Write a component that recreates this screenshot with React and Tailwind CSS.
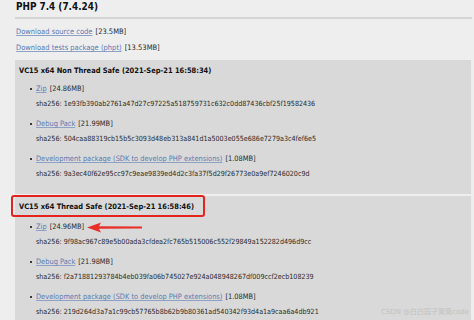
const panels = [
  {
    title: "VC15 x64 Non Thread Safe (2021-Sep-21 16:58:34)",
    items: [
      { name: "Zip", size: "[24.86MB]", sha: "1e93fb390ab2761a47d27c97225a518759731c632c0dd87436cbf25f19582436" },
      { name: "Debug Pack", size: "[21.99MB]", sha: "504caa88319cb15b5c3093d48eb313a841d1a5003e055e686e7279a3c4fef6e5" },
      { name: "Development package (SDK to develop PHP extensions)", size: "[1.08MB]", sha: "9a3ec40f62e95cc97c9eae9839ed4d2c3fa37f5d29f26773e0a9ef7246020c9d" },
    ],
  },
  {
    title: "VC15 x64 Thread Safe (2021-Sep-21 16:58:46)",
    highlight: true,
    items: [
      { name: "Zip", size: "[24.96MB]", sha: "9f98ac967c89e5b00ada3cfdea2fc765b515006c552f29849a152282d496d9cc" },
      { name: "Debug Pack", size: "[21.98MB]", sha: "f2a71881293784b4eb039fa06b745027e924a048948267df009ccf2ecb108239" },
      { name: "Development package (SDK to develop PHP extensions)", size: "[1.08MB]", sha: "219d264d3a7a1c99cb57765b8b62b9b80361ad540342f93d4a1a9caa6a4db921" },
    ],
  },
];

function Item({ item, first, arrow }) {
  return (
    <div className={first ? "relative" : "relative mt-[6px]"}>
      <div className="h-[14px] flex items-center pl-[15px] text-[7.4px]">
        <span className="w-[2px] h-[2px] bg-[#3a3a3a] mr-[4px]" />
        <a className="text-[#5b79b3] underline decoration-[#8ea2c8]">{item.name}</a>
        <span className="ml-[3px] text-[#2a2a2a]">{item.size}</span>
      </div>
      <div className="h-[15px] flex items-center pl-[21px] text-[7.1px] text-[#2a2a2a]">sha256: {item.sha}</div>
      {arrow && (
        <svg className="absolute left-[72px] top-[2px]" width="56" height="11" viewBox="0 0 56 11">
          <path d="M0 5.5 L14 0.5 L12 4.2 L55 4.6 L55 6.4 L12 6.8 L14 10.5 Z" fill="#e8302a" />
        </svg>
      )}
    </div>
  );
}

function Panel({ panel, className }) {
  return (
    <div className={"relative bg-[#d9d9d9] " + className}>
      {panel.highlight && (
        <div className="absolute left-[-4px] top-[-1px] w-[194px] h-[22px] border-2 border-[#e3241f] rounded-[3px]" />
      )}
      <div className="pt-[4px] pb-[4px] pl-[4px]">
        <div className="h-[14px] flex items-center font-bold text-[7.45px] text-[#111]">{panel.title}</div>
      </div>
      <div className={panel.highlight ? "pt-[2px]" : ""}>
        {panel.items.map((it, i) => (
          <Item key={i} item={it} first={i === 0} arrow={panel.highlight && i === 0} />
        ))}
      </div>
    </div>
  );
}

export default function App() {
  return (
    <div
      className="relative w-[474px] h-[320px] overflow-hidden bg-[#eeeeee] text-[7.5px] leading-none"
      style={{ fontFamily: '"DejaVu Sans Condensed", "DejaVu Sans", sans-serif' }}
    >
      <div className="ml-[15px] mr-[2px] h-[19px] border-b-2 border-[#d5d5d5] flex items-center pl-[1px] pb-[4px]">
        <span className="font-bold text-[9.9px] text-[#111]">PHP 7.4 (7.4.24)</span>
      </div>
      <div className="pt-[5px] pl-[16px]">
        <div className="h-[16px] flex items-center">
          <a className="text-[#5b79b3] underline decoration-[#8ea2c8]">Download source code</a>
          <span className="ml-[3px] text-[#2a2a2a]">[23.5MB]</span>
        </div>
        <div className="h-[16px] flex items-center">
          <a className="text-[#5b79b3] underline decoration-[#8ea2c8]">Download tests package (phpt)</a>
          <span className="ml-[3px] text-[#2a2a2a]">[13.53MB]</span>
        </div>
      </div>
      <div className="ml-[15px] mr-[3px] mt-[4px]">
        <Panel panel={panels[0]} className="pb-[13px]" />
        <Panel panel={panels[1]} className="mt-[2px] pb-[10px]" />
      </div>
      <div className="absolute right-[5px] bottom-[4px] text-[7px] text-[#c2c2c2]" style={{ fontFamily: '"DejaVu Sans", "Noto Sans CJK SC", sans-serif' }}>
        CSDN @白白园子筒筒code
      </div>
    </div>
  );
}
